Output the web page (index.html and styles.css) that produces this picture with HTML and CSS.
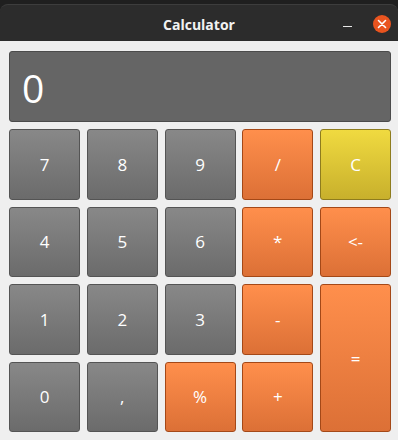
FILE: index.html
```html
<!DOCTYPE html>
<html lang="en">
<head>
    <meta charset="UTF-8">
    <meta name="viewport" content="width=device-width, initial-scale=1.0">
    <title>Calculator</title>
    <link rel="stylesheet" href="styles.css">
</head>
<body>
    <div class="window">
        <header class="titlebar">
            <span class="title">Calculator</span>
            <div class="controls">
                <span class="minimize"></span>
                <span class="close">
                    <svg width="10" height="10" viewBox="0 0 10 10">
                        <path d="M1.5 1.5 L8.5 8.5 M8.5 1.5 L1.5 8.5" stroke="#fff" stroke-width="1.6" stroke-linecap="round"/>
                    </svg>
                </span>
            </div>
        </header>

        <div class="calc">
            <div class="display">0</div>

            <button class="key">7</button>
            <button class="key">8</button>
            <button class="key">9</button>
            <button class="key op">/</button>
            <button class="key clear">C</button>

            <button class="key">4</button>
            <button class="key">5</button>
            <button class="key">6</button>
            <button class="key op">*</button>
            <button class="key op">&lt;-</button>

            <button class="key">1</button>
            <button class="key">2</button>
            <button class="key">3</button>
            <button class="key op">-</button>
            <button class="key op equals">=</button>

            <button class="key">0</button>
            <button class="key">,</button>
            <button class="key op">%</button>
            <button class="key op">+</button>
        </div>
    </div>
</body>
</html>
```

FILE: styles.css
```css
html, body {
    margin: 0;
    padding: 0;
}

body {
    width: 398px;
    height: 440px;
    overflow: hidden;
    background-color: #1f1f1f;
    font-family: 'Open Sans', 'DejaVu Sans', sans-serif;
}

.window {
    padding-top: 4px;
}

.titlebar {
    height: 36px;
    background-color: #2c2c2c;
    border-top: 1px solid #3d3d3d;
    border-radius: 8px 8px 0 0;
    position: relative;
    display: flex;
    align-items: center;
    justify-content: center;
}

.title {
    color: #f2f2f2;
    font-weight: bold;
    font-size: 14px;
    margin-top: 2px;
}

.controls {
    position: absolute;
    right: 7px;
    top: 0;
    bottom: 0;
    display: flex;
    align-items: center;
    gap: 21px;
}

.minimize {
    width: 9px;
    height: 1px;
    background-color: #e8e8e8;
    margin-top: 6px;
}

.close {
    width: 18px;
    height: 18px;
    border-radius: 50%;
    background-color: #e9541f;
    display: flex;
    align-items: center;
    justify-content: center;
    margin-top: 1px;
}

.calc {
    height: 399px;
    box-sizing: border-box;
    background-color: #efefef;
    padding: 10px 7px 8px 9px;
    display: grid;
    grid-template-columns: repeat(5, 1fr);
    grid-template-rows: 71px repeat(4, 70.5px);
    gap: 7px 6.75px;
}

.display {
    grid-column: 1 / -1;
    background-color: #656565;
    border: 1px solid #4b4b4b;
    border-radius: 3px;
    color: #fff;
    font-size: 39px;
    display: flex;
    align-items: center;
    padding: 2px 0 0 12px;
}

.key {
    font-family: inherit;
    font-size: 17px;
    color: #fff;
    border: 1px solid #545454;
    border-radius: 3px;
    background: linear-gradient(#888888, #6b6b6b);
    padding: 0;
    cursor: pointer;
}

.key.op {
    background: linear-gradient(#ff8f4c, #dc7036);
    border-color: #a44817;
}

.key.clear {
    background: linear-gradient(#f0da40, #c8b02c);
    border-color: #8e7c1e;
}

.key.equals {
    grid-row: span 2;
}
```
